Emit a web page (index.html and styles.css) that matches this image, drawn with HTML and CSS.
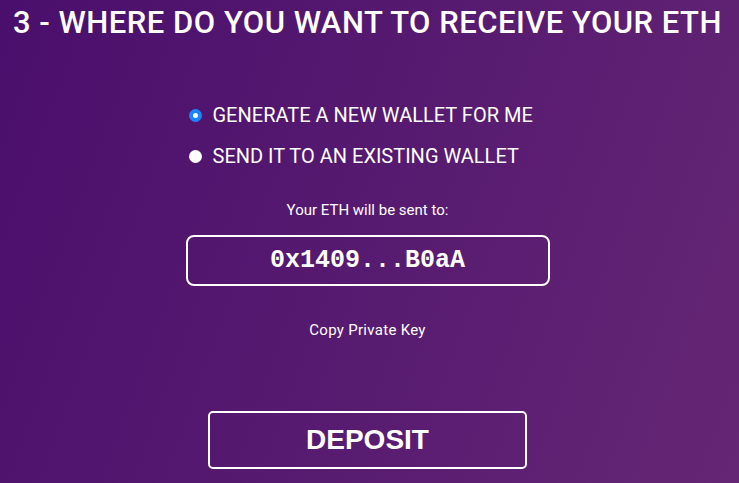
FILE: index.html
```html
<!DOCTYPE html>
<html>
<head>
<meta charset="utf-8">
<link rel="stylesheet" href="styles.css">
</head>
<body>
<div class="page">
  <h1 class="title">3 - WHERE DO YOU WANT TO RECEIVE YOUR ETH</h1>
  <div class="options">
    <label class="option"><span class="radio radio-on"></span><span class="opt-text">GENERATE A NEW WALLET FOR ME</span></label>
    <label class="option"><span class="radio"></span><span class="opt-text">SEND IT TO AN EXISTING WALLET</span></label>
  </div>
  <div class="label">Your ETH will be sent to:</div>
  <div class="address">0x1409...B0aA</div>
  <div class="copy">Copy Private Key</div>
  <button class="deposit">DEPOSIT</button>
</div>
</body>
</html>
```
FILE: styles.css
```css
html, body {
  margin: 0;
  padding: 0;
  height: 100%;
}
body {
  background: linear-gradient(110deg, #4a0f6c 0%, #561a70 50%, #652674 100%);
  font-family: Roboto, "Liberation Sans", sans-serif;
  color: #fff;
  overflow: hidden;
}
.page {
  width: 735px;
  display: flex;
  flex-direction: column;
  align-items: center;
}
.title {
  margin: 0;
  font-size: 31px;
  font-weight: 500;
  letter-spacing: 0.5px;
  line-height: 46px;
  white-space: nowrap;
}
.options {
  width: 364px;
  margin-top: 55px;
  display: flex;
  flex-direction: column;
  gap: 13px;
}
.option {
  display: flex;
  align-items: center;
  height: 28px;
}
.radio {
  width: 13px;
  height: 13px;
  border-radius: 50%;
  background: #fff;
  margin-left: 3px;
  margin-right: 11px;
  box-sizing: border-box;
}
.radio-on {
  background: #fff;
  border: 4.5px solid #1a86fb;
}
.opt-text {
  font-size: 20px;
  line-height: 28px;
}
.label {
  margin-top: 30px;
  font-size: 15px;
  line-height: 20px;
}
.address {
  margin-top: 15px;
  width: 364px;
  height: 51px;
  box-sizing: border-box;
  border: 2px solid #fff;
  border-radius: 8px;
  display: flex;
  align-items: center;
  justify-content: center;
  font-family: "Liberation Mono", "Courier New", monospace;
  font-weight: bold;
  font-size: 25px;
}
.copy {
  margin-top: 34px;
  font-size: 15px;
  letter-spacing: 0.3px;
  line-height: 20px;
}
.deposit {
  margin-top: 71px;
  width: 319px;
  height: 58px;
  box-sizing: border-box;
  border: 2px solid #fff;
  border-radius: 5px;
  background: transparent;
  color: #fff;
  font-family: "Liberation Sans", Arial, sans-serif;
  font-weight: bold;
  font-size: 28px;
  padding: 0;
}
```
